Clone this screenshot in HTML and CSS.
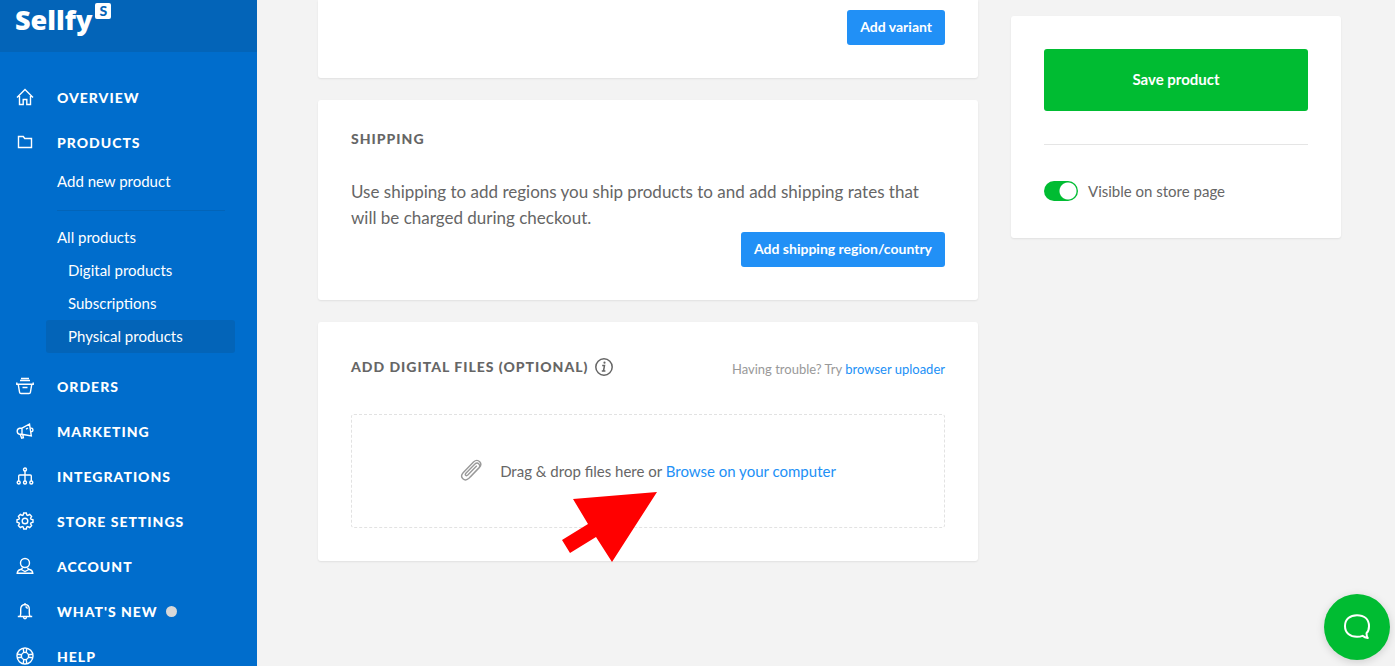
FILE: index.html
```html
<!DOCTYPE html>
<html lang="en">
<head>
<meta charset="utf-8">
<title>Sellfy - Physical products</title>
<link rel="stylesheet" href="styles.css">
</head>
<body>
<div class="app">
  <aside class="sidebar">
    <a class="brand" href="#"><span class="brand-name">Sellfy</span><span class="brand-badge">S</span></a>
    <nav class="nav">
      <a class="nav-item" href="#"><svg class="icon" viewBox="0 0 18 18"><path d="M1 9.5 9 1.5l8 8M3.5 8v8.5h3.7v-5h3.6v5h3.7V8"/></svg>Overview</a>
      <a class="nav-item" href="#"><svg class="icon" viewBox="0 0 18 18"><path d="M2.5 14.5v-11h4.8l1.4 2h6.8v9z"/></svg>Products</a>
      <div class="subnav">
        <a class="sub-item" href="#">Add new product</a>
        <hr class="sub-rule">
        <a class="sub-item" href="#">All products</a>
        <a class="sub-item nested" href="#">Digital products</a>
        <a class="sub-item nested" href="#">Subscriptions</a>
        <a class="sub-item nested active" href="#" aria-current="page">Physical products</a>
      </div>
      <a class="nav-item" href="#"><svg class="icon" viewBox="0 0 18 18"><path d="M5 1.500h8M4 3.500h10M.8 5.600v1.600h16.400V5.600M2.200 7.200l1.400 8.100q.2 1.200 1.400 1.200h8q1.200 0 1.400-1.200l1.400-8.100M6.500 10.500h5"/></svg>Orders</a>
      <a class="nav-item" href="#"><svg class="icon" viewBox="0 0 18 18"><path d="M6 6.200 13.500 2l1.800 12L6 12.300zM6 6.200H3.600Q1.200 6.800 1.200 9.200t2.400 3.100H6M4.300 12.500l1.400 3.700 1.700-.4-.7-3.200M14.300 6.200q2.400-.3 2.600 1.600t-2 2M10 7.200l2-1.200"/></svg>Marketing</a>
      <a class="nav-item" href="#"><svg class="icon" viewBox="0 0 18 18"><circle cx="9" cy="2.500" r="1.500"/><circle cx="2.700" cy="15.500" r="1.500"/><circle cx="9" cy="15.500" r="1.500"/><circle cx="15.300" cy="15.500" r="1.500"/><path d="M9 4v10M2.700 14V9q0-1 1-1h10.600q1 0 1 1v5"/></svg>Integrations</a>
      <a class="nav-item" href="#"><svg class="icon" viewBox="0 0 18 18"><circle cx="9" cy="9" r="2.800"/><path d="M7.700 1h2.600l.5 2 1 .4 1.900-1 1.900 1.900-1 1.900.4 1 2 .5v2.600l-2 .5-.4 1 1 1.900-1.900 1.900-1.900-1-1 .4-.5 2H7.700l-.5-2-1-.4-1.900 1-1.900-1.900 1-1.900-.4-1-2-.5V7.700l2-.5.4-1-1-1.900 1.900-1.900 1.900 1 1-.4z"/></svg>Store settings</a>
      <a class="nav-item" href="#"><svg class="icon" viewBox="0 0 18 18"><circle cx="9" cy="6" r="4.500"/><path d="M6.500 10.700q-.2 1.400-2 1.800-3 .7-3.300 3.700h15.600q-.3-3-3.300-3.700-1.800-.4-2-1.800M5.200 12.500 9 14.500l3.800-2"/></svg>Account</a>
      <a class="nav-item" href="#"><svg class="icon" viewBox="0 0 18 18"><path d="M9 1v1.500M1.800 14.500h14.400M3.800 14.500q.9-1.200.9-3V7.200q0-4.400 4.300-4.700 4.300.3 4.300 4.700v4.300q0 1.800.9 3M7.400 14.700q.2 2 1.600 2t1.600-2M9.500 4.800q1.700.3 1.800 2"/></svg>What's new<span class="dot"></span></a>
      <a class="nav-item" href="#"><svg class="icon" viewBox="0 0 18 18"><circle cx="9" cy="9" r="8"/><circle cx="9" cy="9" r="3.600"/><path d="m7.200 1.200.6 4.400M10.800 1.200l-.6 4.400M7.200 16.800l.6-4.400M10.800 16.800l-.6-4.400M1.200 7.200l4.400.6M1.200 10.800l4.400-.6M16.800 7.200l-4.400.6M16.800 10.800l-4.400-.6"/></svg>Help</a>
    </nav>
  </aside>

  <main class="content">
    <div class="cards">
      <section class="card card-variants">
        <button class="btn" type="button">Add variant</button>
      </section>

      <section class="card card-shipping">
        <h2 class="title">Shipping</h2>
        <p class="lead">Use shipping to add regions you ship products to and add shipping rates that will be charged during checkout.</p>
        <button class="btn" type="button">Add shipping region/country</button>
      </section>

      <section class="card card-files">
        <header class="files-head">
          <h2 class="title">Add digital files (optional)</h2>
          <svg class="info" viewBox="0 0 18 18"><circle cx="9" cy="9" r="8.200"/><path d="M7.200 7.500h2.300l-1 5.500M6.800 13.100h3.600"/><circle class="info-dot" cx="9.500" cy="4.700" r="1.100"/></svg>
          <p class="hint">Having trouble? Try <a class="link" href="#">browser uploader</a></p>
        </header>
        <div class="dropzone">
          <svg class="clip" viewBox="0 0 22 24"><path d="m16.800 6.800-9 9.300q-1.200 1.100-2.100.2t.2-2.100l8.800-9q2.300-2.100 4.200-.3t-.2 4.200L8.900 19.300q-3.200 3-6 .4t.2-5.900L13.500 3q3.400-3.100 6.200-.3 2.600 2.700-.5 6l-8.900 9.200"/></svg>
          <p class="drop-text">Drag &amp; drop files here or <a class="link" href="#">Browse on your computer</a></p>
          <svg class="pointer" viewBox="0 0 96 72"><path d="M95 0 11 7l15 25L0 48l8 13 26-16 16 25z"/></svg>
        </div>
      </section>
    </div>

    <aside class="card card-save">
      <button class="btn btn-save" type="button">Save product</button>
      <hr class="rule">
      <label class="visible" for="visible"><input class="toggle" id="visible" type="checkbox" role="switch" checked>Visible on store page</label>
    </aside>
  </main>

  <button class="chat" type="button" aria-label="Open chat"><svg class="chat-icon" viewBox="0 0 28 28"><path d="M23.500 20.300q2.500-2.500 2.500-7C26 6 21 2.200 14 2.200S2 6 2 13s5 10.800 12 10.800q3.200 0 5.500-1 2.200 2 5.300 2.200-1.300-1.800-1.300-4.700z"/></svg></button>
</div>
</body>
</html>
```
FILE: styles.css
```css
* { box-sizing: border-box; }

body {
  margin: 0;
  background: #f3f3f3;
  color: #666;
  font-family: Lato, "Open Sans", sans-serif;
  font-size: 15px;
}

h2, p, hr { margin: 0; }
hr { border: 0; height: 1px; }
a { color: inherit; text-decoration: none; }
button { font-family: inherit; cursor: pointer; border: 0; }

.app { display: flex; height: 100vh; overflow: hidden; }

/* Sidebar */
.sidebar {
  flex: 0 0 257px;
  overflow: hidden;
  background: #006dcc;
  color: #fff;
}

.brand {
  display: flex;
  gap: 3px;
  height: 52px;
  padding: 3px 15px;
  background: #0364b8;
}
.brand-name { font-family: "Open Sans", sans-serif; font-size: 27px; font-weight: 800; line-height: 34px; }
.brand-badge {
  width: 16px;
  height: 16px;
  border-radius: 2px;
  background: #fff;
  color: #0364b8;
  font-size: 14px;
  font-weight: 900;
  line-height: 16px;
  text-align: center;
}

.nav { padding-top: 23px; }
.nav-item {
  display: flex;
  align-items: center;
  height: 45px;
  padding-left: 16px;
  font-size: 14px;
  font-weight: 900;
  letter-spacing: 1px;
  text-transform: uppercase;
}
.icon {
  width: 18px;
  height: 18px;
  margin: 0 23px 2px 0;
  fill: none;
  stroke: #fff;
  stroke-width: 1.4;
}
.dot { width: 11px; height: 11px; margin-left: 8px; border-radius: 50%; background: #d8d8d8; }

.subnav { margin: 0 22px 11px 46px; }
.sub-item {
  display: block;
  padding-left: 11px;
  border-radius: 3px;
  line-height: 33px;
}
.nested { padding-left: 22px; }
.active { background: #0364b8; }
.sub-rule { margin: 12px 10px 10px 11px; background: #0364b8; }

/* Content */
.content {
  flex: 1;
  display: grid;
  grid-template-columns: 2fr 1fr;
  gap: 33px;
  align-items: start;
  padding: 0 54px 0 61px;
}
.cards { display: flex; flex-direction: column; gap: 22px; }
.card {
  display: flex;
  flex-direction: column;
  padding: 33px;
  border-radius: 3px;
  background: #fff;
  box-shadow: 0 1px 2px rgba(0, 0, 0, .08);
}
.card-variants { padding-top: 10px; border-radius: 0 0 3px 3px; }
.card-shipping { padding-top: 28px; }
.card-files { padding-top: 34px; }
.card-save { margin-top: 16px; }

.title {
  font-size: 14px;
  font-weight: 900;
  letter-spacing: 1px;
  line-height: 22px;
  text-transform: uppercase;
}
.lead { margin: 29px 0 1px; font-size: 17px; line-height: 26px; }

.btn {
  align-self: flex-end;
  height: 35px;
  padding: 0 13px 2px;
  border-radius: 3px;
  background: #2190f6;
  color: #fff;
  font-size: 14px;
  font-weight: 700;
}
.btn-save { align-self: stretch; height: 62px; background: #00bc32; font-size: 15px; }

.files-head { display: flex; align-items: center; margin-bottom: 36px; }
.info { width: 18px; height: 18px; margin-left: 7px; fill: none; stroke: #666; stroke-width: 1.5; }
.info-dot { fill: #666; stroke: none; }
.hint { margin-left: auto; padding-top: 3px; color: #999; font-size: 13px; }
.link { color: #2190f6; }

.dropzone {
  position: relative;
  display: flex;
  align-items: center;
  justify-content: center;
  gap: 18px;
  height: 114px;
  border: 1px dashed #e2e2e2;
  border-radius: 3px;
}
.clip { width: 22px; height: 24px; fill: none; stroke: #999; stroke-width: 1.4; }
.pointer { position: absolute; top: 77px; left: calc(50% - 86px); width: 96px; height: 72px; fill: #f00; }

.rule { margin: 33px 0; background: #e5e5e5; }
.visible { display: flex; align-items: center; gap: 10px; margin-bottom: 1px; line-height: 26px; }
.toggle {
  appearance: none;
  width: 34px;
  height: 20px;
  margin: 0;
  border-radius: 10px;
  background: radial-gradient(circle at 24px 10px, #fff 8px, #00bc32 9px);
}

/* Chat launcher */
.chat {
  position: fixed;
  right: 5px;
  bottom: 6px;
  display: grid;
  place-items: center;
  width: 66px;
  height: 66px;
  padding: 0;
  border-radius: 50%;
  background: #00bc32;
  box-shadow: 0 2px 8px rgba(0, 0, 0, .15);
}
.chat-icon { width: 28px; height: 28px; fill: none; stroke: #fff; stroke-width: 2; stroke-linejoin: round; }
```
